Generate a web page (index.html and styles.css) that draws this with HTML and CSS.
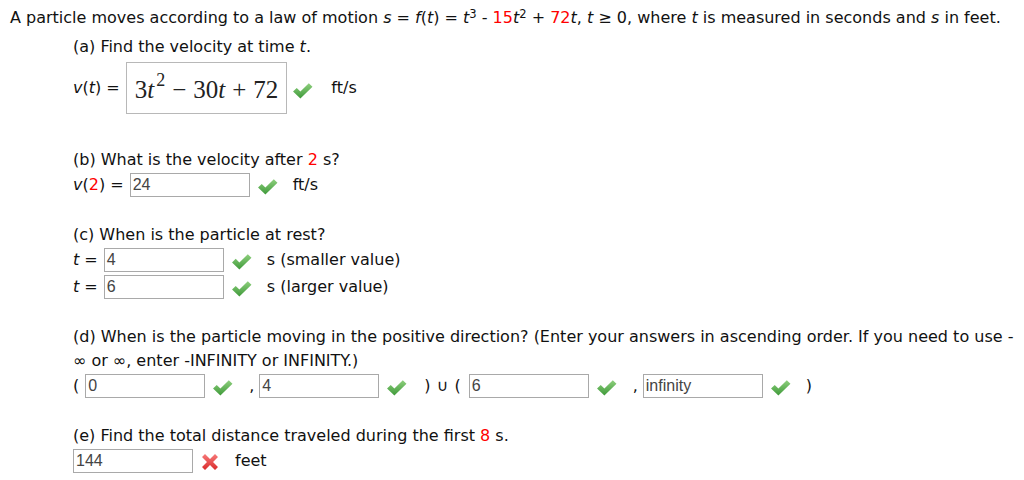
FILE: index.html
```html
<!DOCTYPE html>
<html lang="en">
<head>
  <meta charset="UTF-8">
  <title>Particle motion</title>
  <link rel="stylesheet" href="styles.css">
</head>
<body>
  <svg width="0" height="0" class="defs">
    <defs>
      <linearGradient id="g-check" x1="0" y1="0" x2="0" y2="1">
        <stop offset="0" stop-color="#8fd07e"/>
        <stop offset="1" stop-color="#3f9a3a"/>
      </linearGradient>
      <linearGradient id="g-cross" x1="0" y1="0" x2="0" y2="1">
        <stop offset="0" stop-color="#f77a7a"/>
        <stop offset="1" stop-color="#d92b2b"/>
      </linearGradient>
      <symbol id="check" viewBox="0 0 20 16">
        <path d="M1 9 L4.5 5.5 L8 9 L16 1 L19.5 4.5 L8 15.5 Z" fill="url(#g-check)"/>
      </symbol>
      <symbol id="cross" viewBox="0 0 20 20">
        <path d="M2 5 L5 2 L10 7 L15 2 L18 5 L13 10 L18 15 L15 18 L10 13 L5 18 L2 15 L7 10 Z" fill="url(#g-cross)"/>
      </symbol>
    </defs>
  </svg>

  <p class="intro">A particle moves according to a law of motion <i>s</i> = <i>f</i>(<i>t</i>) = <i>t</i><sup>3</sup> - <span class="red">15</span><i>t</i><sup>2</sup> + <span class="red">72</span><i>t</i>, <i>t</i> &ge; 0, where <i>t</i> is measured in seconds and <i>s</i> in feet.</p>

  <div class="parts">
    <!-- (a) -->
    <p class="q">(a) Find the velocity at time <i>t</i>.</p>
    <div class="row math-row">
      <span class="label"><i>v</i>(<i>t</i>) =</span>
      <span class="math-box">3<i>t</i><sup>2</sup><span class="op">&minus;</span>30<i>t</i><span class="op">+</span>72</span>
      <svg class="mark"><use href="#check"/></svg>
      <span class="unit">ft/s</span>
    </div>

    <!-- (b) -->
    <p class="q gap first-gap">(b) What is the velocity after <span class="red">2</span> s?</p>
    <div class="row">
      <span class="label"><i>v</i>(<span class="red">2</span>) =</span>
      <span class="answer">24</span>
      <svg class="mark"><use href="#check"/></svg>
      <span class="unit">ft/s</span>
    </div>

    <!-- (c) -->
    <p class="q gap">(c) When is the particle at rest?</p>
    <div class="row">
      <span class="label"><i>t</i> =</span>
      <span class="answer">4</span>
      <svg class="mark"><use href="#check"/></svg>
      <span class="unit">s (smaller value)</span>
    </div>
    <div class="row">
      <span class="label"><i>t</i> =</span>
      <span class="answer">6</span>
      <svg class="mark"><use href="#check"/></svg>
      <span class="unit">s (larger value)</span>
    </div>

    <!-- (d) -->
    <p class="q gap">(d) When is the particle moving in the positive direction? (Enter your answers in ascending order. If you need to use -<wbr>&infin; or &infin;, enter -INFINITY or INFINITY.)</p>
    <div class="row">
      <span class="label">(</span>
      <span class="answer">0</span>
      <svg class="mark"><use href="#check"/></svg>
      <span class="sep">,</span>
      <span class="answer">4</span>
      <svg class="mark"><use href="#check"/></svg>
      <span class="sep union">) &cup; (</span>
      <span class="answer">6</span>
      <svg class="mark"><use href="#check"/></svg>
      <span class="sep">,</span>
      <span class="answer">infinity</span>
      <svg class="mark"><use href="#check"/></svg>
      <span class="unit">)</span>
    </div>

    <!-- (e) -->
    <p class="q gap">(e) Find the total distance traveled during the first <span class="red">8</span> s.</p>
    <div class="row">
      <span class="answer">144</span>
      <svg class="mark cross"><use href="#cross"/></svg>
      <span class="unit">feet</span>
    </div>
  </div>
</body>
</html>
```

FILE: styles.css
```css
/* page */
body {
  font-family: "DejaVu Sans", Verdana, sans-serif;
  font-size: 16px;
  line-height: 24px;
  color: #111;
  background: white;
  margin: 0;
  padding: 6px 5px 0 10px;
}

.defs {
  position: absolute;
}

p {
  margin: 0;
}

sup {
  font-size: 0.72em;
  line-height: 0;
  vertical-align: 0.45em;
}

.red {
  color: #f00;
}

.intro {
  white-space: nowrap;
}

/* questions */
.parts {
  padding-left: 63px;
  padding-top: 5px;
}

.q.gap {
  margin-top: 26px;
}

.q.first-gap {
  margin-top: 34px;
}

.row {
  display: flex;
  align-items: center;
  height: 25px;
}

.row + .row {
  margin-top: 2px;
}

.label {
  margin-right: 6px;
  white-space: nowrap;
}

.answer {
  box-sizing: border-box;
  width: 120px;
  height: 24px;
  border: 1px solid #a9a9a9;
  padding: 0 2px;
  font-family: "Liberation Sans", Arial, sans-serif;
  font-size: 16px;
  line-height: 22px;
  color: #444;
}

.mark {
  width: 21px;
  height: 17px;
  margin: 4px 15px 0 7px;
}

.mark.cross {
  width: 20px;
  height: 20px;
  margin: 2px 15px 0 7px;
}

.sep {
  margin: 0 5px 0 1px;
  white-space: nowrap;
}

.sep.union {
  word-spacing: 1px;
  margin: 0 8px 0 2px;
}

/* math answer of part (a) */
.math-row {
  height: 52px;
  margin-top: 3px;
}

.math-box {
  box-sizing: border-box;
  height: 52px;
  border: 1px solid #b8b8b8;
  padding: 4px 8px 0 8px;
  font-family: "Liberation Serif", serif;
  font-size: 25px;
  line-height: 46px;
  color: #222;
  white-space: nowrap;
}

.math-box sup {
  font-size: 0.72em;
  vertical-align: 0.65em;
  padding-left: 2px;
}

.math-box .op {
  margin: 0 7px;
}

.math-row .mark {
  margin-left: 5px;
  margin-right: 18px;
}
```
